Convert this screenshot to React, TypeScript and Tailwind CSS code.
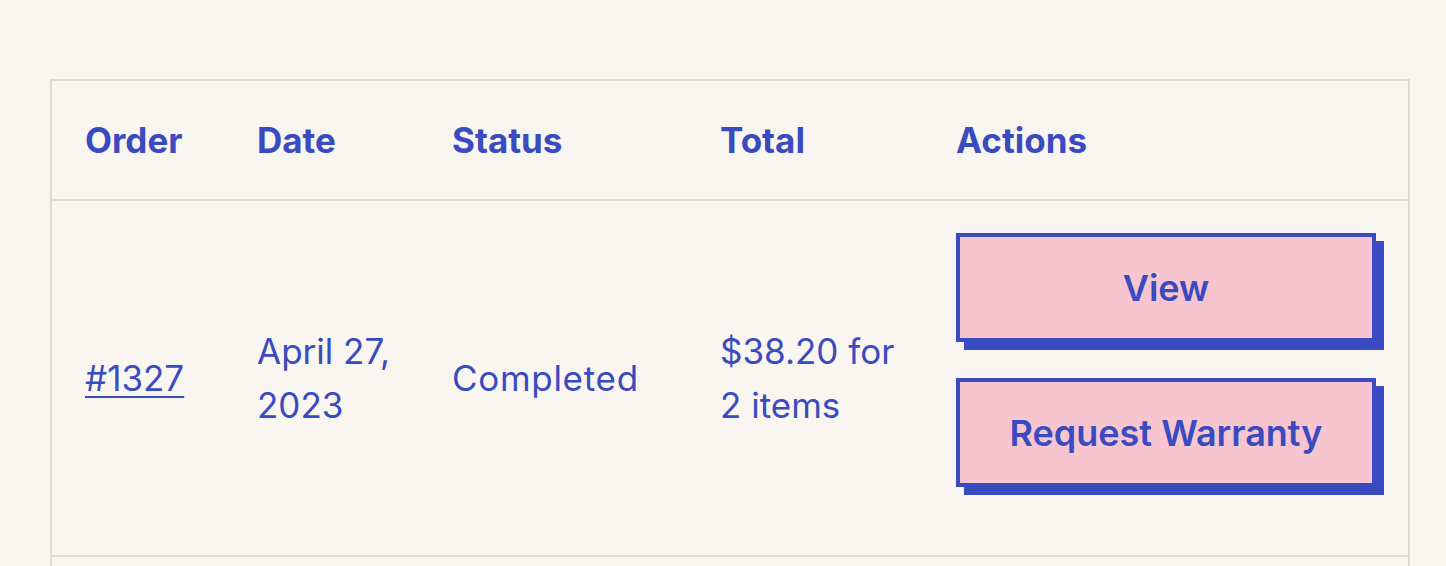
import React from "react";

function ActionButton({ label }: { label: string }) {
  return (
    <button className="w-[420px] h-[109px] mb-[36px] border-4 border-[#3a4bc0] bg-[#f6c5d0] shadow-[8px_8px_0_#3a4bc0] text-[#3a4bc0] text-[36px] font-semibold flex items-center justify-center">
      {label}
    </button>
  );
}

export default function App() {
  const font = { fontFamily: "Inter, 'Noto Sans', sans-serif" };
  return (
    <div className="bg-[#f9f5f1] pt-[79px] pl-[50px] overflow-hidden h-[566px]" style={font}>
      <div className="w-[1360px] border-2 border-[#e0dad5] text-[#3a4bc0]">
        <div className="grid grid-cols-[172px_195px_268px_236px_1fr] h-[120px] items-center border-b-2 border-[#e0dad5] text-[35px] font-bold">
          <div className="pl-[33px]">Order</div>
          <div className="pl-[33px]">Date</div>
          <div className="pl-[33px]">Status</div>
          <div className="pl-[33px]">Total</div>
          <div className="pl-[33px]">Actions</div>
        </div>
        <div className="grid grid-cols-[172px_195px_268px_236px_1fr] h-[356px] items-center border-b-2 border-[#e0dad5] text-[35px] leading-[54px]">
          <div className="pl-[33px]">
            <a href="#" className="underline underline-offset-[5px] decoration-2">#1327</a>
          </div>
          <div className="pl-[33px] whitespace-nowrap">
            April 27,
            <br />
            2023
          </div>
          <div className="pl-[33px] tracking-[0.02em]">Completed</div>
          <div className="pl-[33px] whitespace-nowrap">
            $38.20 for
            <br />
            2 items
          </div>
          <div className="pl-[33px] flex flex-col">
            <ActionButton label="View" />
            <ActionButton label="Request Warranty" />
          </div>
        </div>
        <div className="h-[356px]" />
      </div>
    </div>
  );
}
